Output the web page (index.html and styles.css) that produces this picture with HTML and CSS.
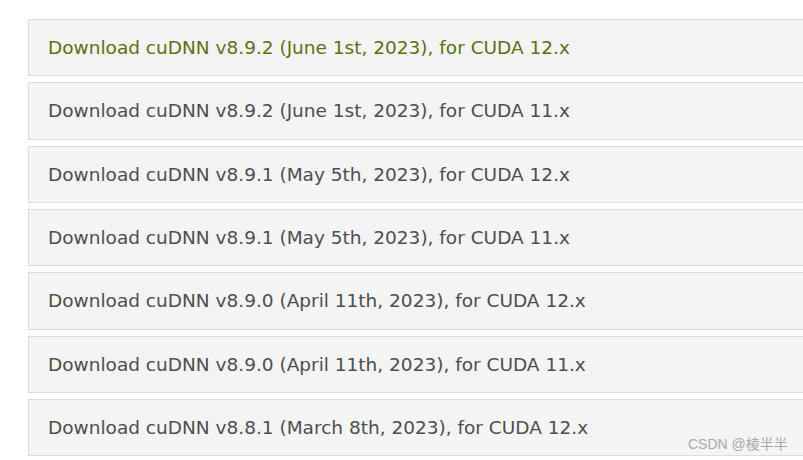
FILE: index.html
```html
<!DOCTYPE html>
<html>
<head>
<meta charset="utf-8">
<link rel="stylesheet" href="styles.css">
</head>
<body>
<div class="list">
  <div class="row active">Download cuDNN v8.9.2 (June 1st, 2023), for CUDA 12.x</div>
  <div class="row">Download cuDNN v8.9.2 (June 1st, 2023), for CUDA 11.x</div>
  <div class="row">Download cuDNN v8.9.1 (May 5th, 2023), for CUDA 12.x</div>
  <div class="row">Download cuDNN v8.9.1 (May 5th, 2023), for CUDA 11.x</div>
  <div class="row">Download cuDNN v8.9.0 (April 11th, 2023), for CUDA 12.x</div>
  <div class="row">Download cuDNN v8.9.0 (April 11th, 2023), for CUDA 11.x</div>
  <div class="row">Download cuDNN v8.8.1 (March 8th, 2023), for CUDA 12.x</div>
</div>
<div class="watermark">CSDN @棱半半</div>
</body>
</html>
```
FILE: styles.css
```css
html, body {
  margin: 0;
  padding: 0;
  background: #ffffff;
  width: 803px;
  height: 460px;
  overflow: hidden;
}
.list {
  display: flex;
  flex-direction: column;
  gap: 6px;
  padding: 19px 0 0 28px;
}
.row {
  box-sizing: border-box;
  height: 57.33px;
  width: 800px;
  border: 1px solid #dcdcdc;
  background: #f4f4f4;
  display: flex;
  align-items: center;
  padding-left: 19px;
  font-family: "DejaVu Sans", sans-serif;
  font-size: 18.5px;
  color: #4e4e4e;
  white-space: nowrap;
}
.row.active {
  color: #5b7114;
}
.watermark {
  position: absolute;
  left: 688px;
  top: 433px;
  font-family: "Liberation Sans", "Noto Sans CJK SC", sans-serif;
  font-size: 14px;
  color: #a8a8a8;
}
```
